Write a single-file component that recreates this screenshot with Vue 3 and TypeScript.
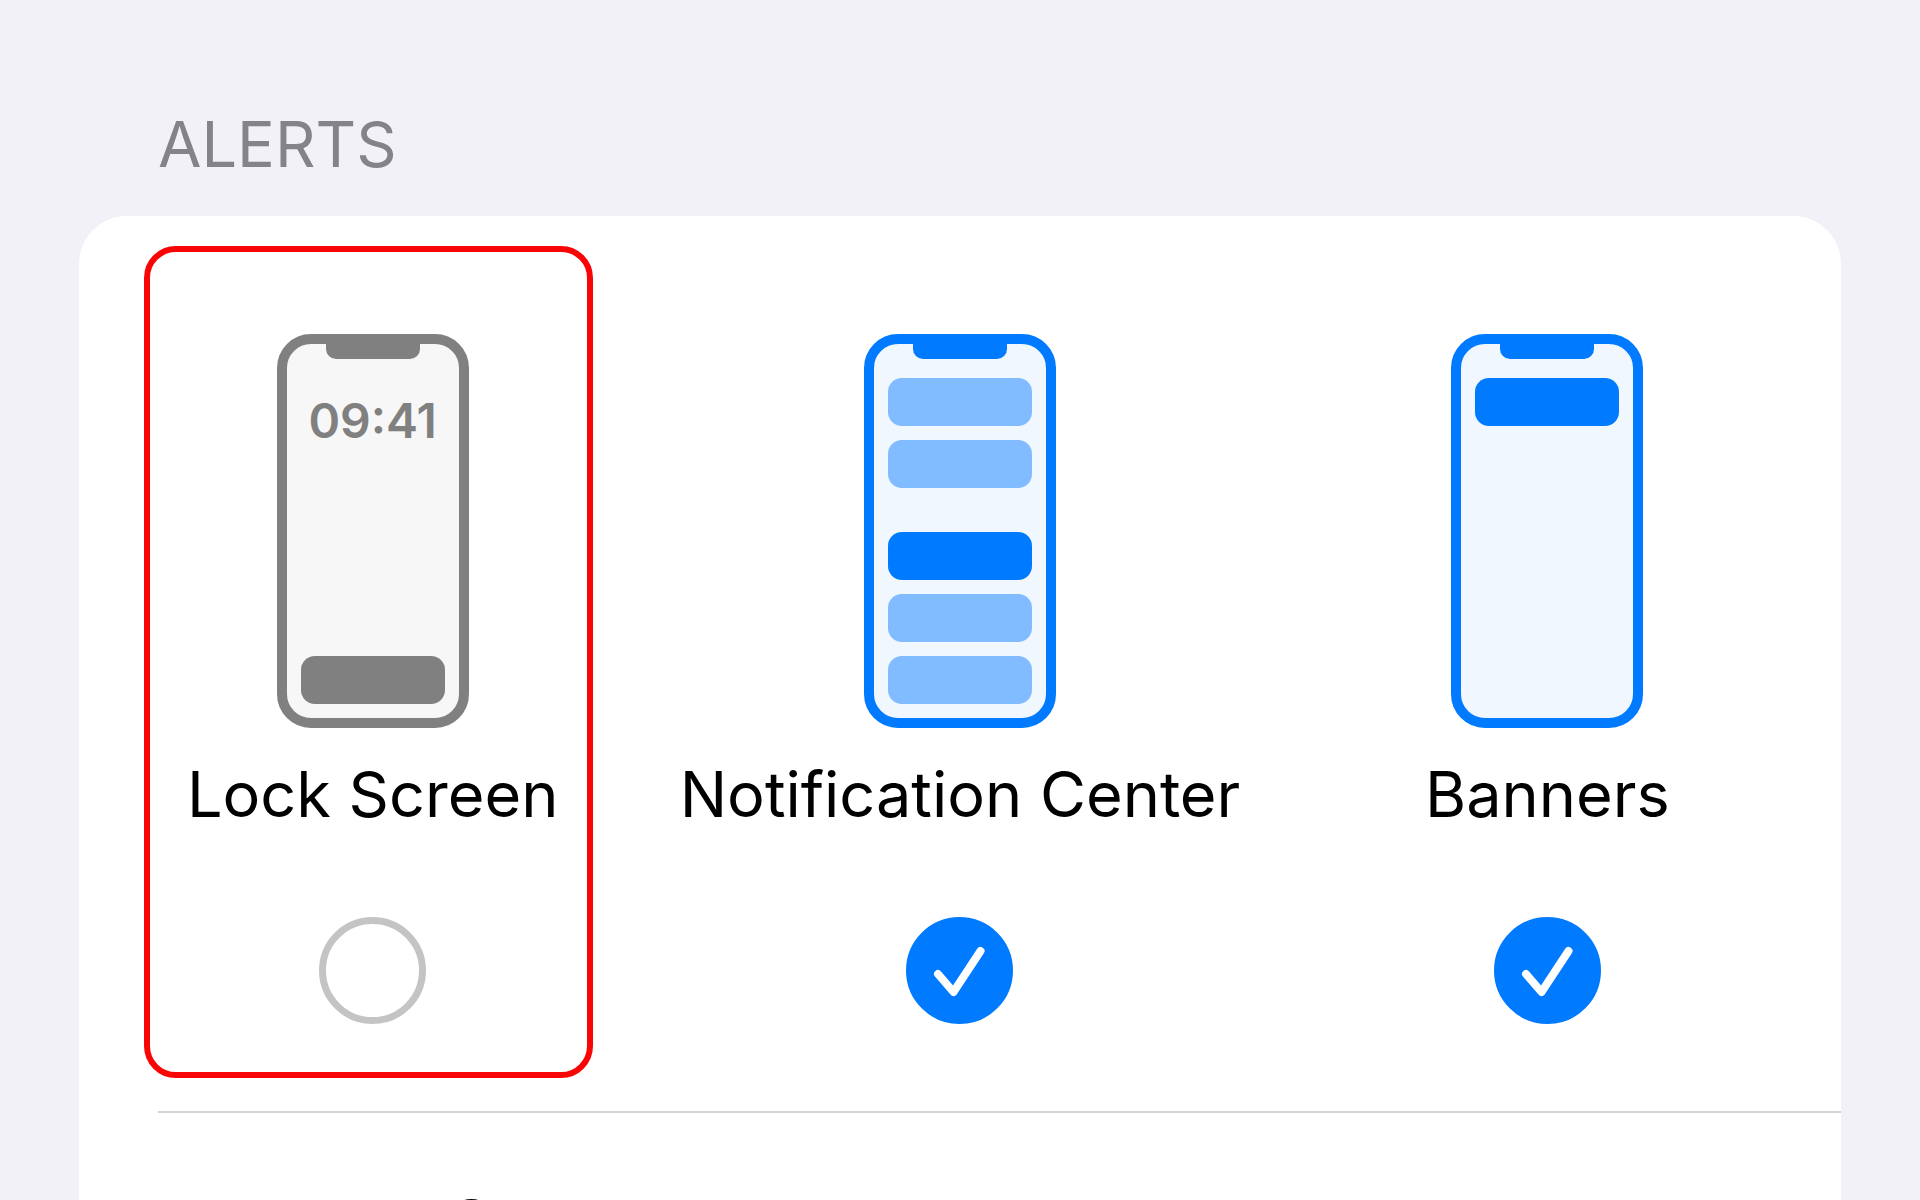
<script setup lang="ts">
import { ref } from 'vue'

type Bar = 'strong' | 'soft' | 'gap'

interface AlertStyle {
  id: string
  label: string
  enabled: boolean
  highlighted: boolean
  time?: string
  align: 'top' | 'bottom'
  bars: Bar[]
}

const styles = ref<AlertStyle[]>([
  { id: 'lock', label: 'Lock Screen', enabled: false, highlighted: true, time: '09:41', align: 'bottom', bars: ['strong'] },
  { id: 'center', label: 'Notification Center', enabled: true, highlighted: false, align: 'top', bars: ['soft', 'soft', 'gap', 'strong', 'soft', 'soft'] },
  { id: 'banners', label: 'Banners', enabled: true, highlighted: false, align: 'top', bars: ['strong'] },
])
</script>

<template>
  <main class="page">
    <h2 class="heading">ALERTS</h2>
    <section class="card">
      <div class="options">
        <label
          v-for="item in styles"
          :key="item.id"
          class="option"
          :class="{ off: !item.enabled, highlighted: item.highlighted }"
        >
          <span class="phone" :class="item.align" aria-hidden="true">
            <span class="notch"></span>
            <span v-if="item.time" class="time">{{ item.time }}</span>
            <span v-for="(bar, i) in item.bars" :key="i" class="bar" :class="bar"></span>
          </span>
          <span class="name">{{ item.label }}</span>
          <span class="tick">
            <input v-model="item.enabled" type="checkbox" :name="item.id" />
            <svg v-if="item.enabled" viewBox="0 0 107 107" aria-hidden="true">
              <path d="M32 57 L47.500 75 L74.500 34" />
            </svg>
          </span>
        </label>
      </div>
      <div class="row">Banner Style</div>
    </section>
  </main>
</template>

<style>
body {
  margin: 0;
  background: #f2f1f7;
}
</style>

<style scoped>
.page {
  box-sizing: border-box;
  height: 100vh;
  overflow: hidden;
  padding: 104px 79px 0;
  background: #f2f1f7;
  font-family: Inter, "Liberation Sans", sans-serif;
  color: #000;
}

.heading {
  margin: 0 0 32px;
  padding-left: 79px;
  font-size: 63px;
  line-height: 80px;
  font-weight: 400;
  color: #848388;
}

.card {
  background: #fff;
  border-radius: 48px;
}

.options {
  display: grid;
  grid-template-columns: repeat(3, minmax(0, 1fr));
}

.option {
  position: relative;
  display: flex;
  flex-direction: column;
  align-items: center;
  padding: 118px 0 87px;
  --ink: #007aff;
  --soft: #80bcff;
  --screen: #f0f7ff;
}

.option.off {
  --ink: #808080;
  --screen: #f7f7f7;
}

.option.highlighted::after {
  content: "";
  position: absolute;
  inset: 30px 73px 33px 65px;
  border: 6px solid #f80505;
  border-radius: 32px;
}

.phone {
  box-sizing: border-box;
  display: flex;
  flex-direction: column;
  align-items: center;
  gap: 14px;
  width: 192px;
  height: 394px;
  padding-bottom: 14px;
  border: 10px solid var(--ink);
  border-radius: 34px;
  background: var(--screen);
}

.notch {
  width: 94px;
  height: 15px;
  margin-bottom: 5px;
  border-radius: 0 0 10px 10px;
  background: var(--ink);
}

.time {
  font-size: 48px;
  line-height: 86px;
  font-weight: 600;
  color: var(--ink);
}

.bar {
  width: 144px;
  height: 48px;
  border-radius: 14px;
  background: var(--ink);
}

.bar.soft {
  background: var(--soft);
}

.bar.gap {
  height: 16px;
  background: none;
}

.phone.bottom .bar {
  margin-top: auto;
}

.name {
  margin-top: 26px;
  font-size: 63px;
  line-height: 80px;
  white-space: nowrap;
}

.tick {
  display: grid;
  width: 107px;
  height: 107px;
  margin-top: 83px;
}

.tick input,
.tick svg {
  grid-area: 1 / 1;
  width: 107px;
  height: 107px;
}

.tick input {
  appearance: none;
  box-sizing: border-box;
  margin: 0;
  border: 7px solid #c4c4c4;
  border-radius: 50%;
}

.tick input:checked {
  border-color: #007aff;
  background: #007aff;
}

.tick svg {
  pointer-events: none;
  fill: none;
  stroke: #fff;
  stroke-width: 8;
  stroke-linecap: round;
  stroke-linejoin: round;
}

.row {
  margin-left: 79px;
  padding: 59px 0;
  border-top: 2px solid #d3d3d4;
  font-size: 79px;
  line-height: 112px;
}
</style>
